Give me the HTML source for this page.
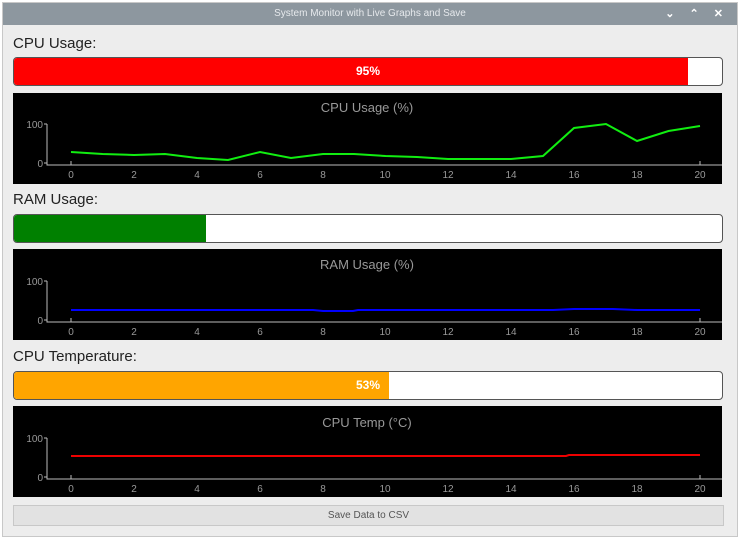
<!DOCTYPE html>
<html><head><style>
body{margin:0;width:740px;height:539px;background:#fff;font-family:"Liberation Sans",sans-serif;overflow:hidden;position:relative}
.win{position:absolute;left:2px;top:2px;width:736px;height:535px;background:#ededed;border:1px solid #c8c8c8;box-sizing:border-box}
.tb{position:absolute;left:0;top:0;width:100%;height:22px;background:#8d979f;color:#e6e9ec;font-size:10px;text-align:center;line-height:22px}
.ctl{position:absolute;right:8px;top:0;color:#fff;font-size:11px;font-weight:bold;letter-spacing:6px}
.lbl{position:absolute;left:13px;font-size:15px;color:#222}
.bar{position:absolute;left:13px;width:710px;height:29px;border:1px solid #555;border-radius:4px;background:#fff;box-sizing:border-box;overflow:hidden}
.fill{position:absolute;left:0;top:0;bottom:0}
.pct{position:absolute;left:0;width:100%;top:0;line-height:27px;text-align:center;color:#fff;font-weight:bold;font-size:12px}
.g{position:absolute;left:13px;width:709px;height:91px;background:#000}
.btn{position:absolute;left:13px;top:505px;width:711px;height:21px;background:#e2e2e2;border:1px solid #c8c8c8;box-sizing:border-box;font-size:10px;color:#555;text-align:center;line-height:19px}
</style></head><body>
<div class="win">
<div class="tb">System Monitor with Live Graphs and Save<span class="ctl">⌄ ⌃ ✕</span></div>
</div>
<div class="lbl" style="top:35px">CPU Usage:</div>
<div class="bar" style="top:57px"><div class="fill" style="width:674px;background:#f00"></div><div class="pct">95%</div></div>
<svg class="g" style="top:93px" viewBox="0 0 709 91">
<g fill="#999" font-family="Liberation Sans" font-size="10"><text x="354" y="19" text-anchor="middle" font-size="13">CPU Usage (%)</text>
<text x="30" y="35" text-anchor="end">100</text><text x="30" y="74" text-anchor="end">0</text>
<g text-anchor="middle"><text x="58" y="85">0</text><text x="121" y="85">2</text><text x="184" y="85">4</text><text x="247" y="85">6</text><text x="310" y="85">8</text><text x="372" y="85">10</text><text x="435" y="85">12</text><text x="498" y="85">14</text><text x="561" y="85">16</text><text x="624" y="85">18</text><text x="687" y="85">20</text></g></g>
<path d="M34 31V72H709M31 31H34M31 70H34M58 72V68M687 72V68" stroke="#bbb" fill="none"/>
<polyline fill="none" stroke="#1e1" stroke-width="2" points="58,59 89.5,61 121,62 152,61 184,65 215,67 247,59 278,65 310,61 341,61 372.5,63 404,64 435,66 467,66 498,66 530,63 561,35 593,31 624,48 655.5,38 687,33"/>
</svg>
<div class="lbl" style="top:191px">RAM Usage:</div>
<div class="bar" style="top:214px"><div class="fill" style="width:192px;background:#008000"></div></div>
<svg class="g" style="top:249px" viewBox="0 0 709 91">
<g fill="#999" font-family="Liberation Sans" font-size="10"><text x="354" y="20" text-anchor="middle" font-size="13">RAM Usage (%)</text>
<text x="30" y="36" text-anchor="end">100</text><text x="30" y="75" text-anchor="end">0</text>
<g text-anchor="middle"><text x="58" y="86">0</text><text x="121" y="86">2</text><text x="184" y="86">4</text><text x="247" y="86">6</text><text x="310" y="86">8</text><text x="372" y="86">10</text><text x="435" y="86">12</text><text x="498" y="86">14</text><text x="561" y="86">16</text><text x="624" y="86">18</text><text x="687" y="86">20</text></g></g>
<path d="M34 32V73H709M31 32H34M31 71H34M58 73V69M687 73V69" stroke="#bbb" fill="none"/>
<polyline fill="none" stroke="#00f" stroke-width="2" points="58,61 300,61 310,62 340,62 345,61 540,61 561,60 600,60 624,61 687,61"/>
</svg>
<div class="lbl" style="top:348px">CPU Temperature:</div>
<div class="bar" style="top:371px"><div class="fill" style="width:375px;background:#ffa500"></div><div class="pct">53%</div></div>
<svg class="g" style="top:406px" viewBox="0 0 709 91">
<g fill="#999" font-family="Liberation Sans" font-size="10"><text x="354" y="21" text-anchor="middle" font-size="13">CPU Temp (°C)</text>
<text x="30" y="36" text-anchor="end">100</text><text x="30" y="75" text-anchor="end">0</text>
<g text-anchor="middle"><text x="58" y="86">0</text><text x="121" y="86">2</text><text x="184" y="86">4</text><text x="247" y="86">6</text><text x="310" y="86">8</text><text x="372" y="86">10</text><text x="435" y="86">12</text><text x="498" y="86">14</text><text x="561" y="86">16</text><text x="624" y="86">18</text><text x="687" y="86">20</text></g></g>
<path d="M34 32V73H709M31 32H34M31 71H34M58 73V69M687 73V69" stroke="#bbb" fill="none"/>
<polyline fill="none" stroke="#e00" stroke-width="2" points="58,50 553,50 556,49 687,49"/>
</svg>
<div class="btn">Save Data to CSV</div>
</body></html>
